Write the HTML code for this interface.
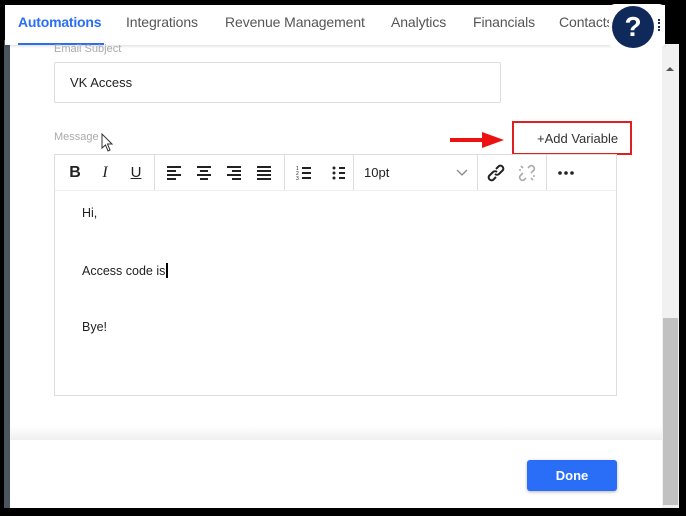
<!DOCTYPE html>
<html><head><style>
*{margin:0;padding:0;box-sizing:border-box}
body{width:686px;height:516px;background:#000;position:relative;overflow:hidden;font-family:"Liberation Sans",sans-serif}
.abs{position:absolute}
.nav span{position:absolute;top:9px;font-size:14px;color:#555;letter-spacing:-0.1px}
.tb{position:absolute;top:0;height:35px;display:flex;align-items:center;justify-content:center}
.sep{position:absolute;top:0;width:1px;height:35px;background:#ddd}
</style></head><body>
<div class="abs" style="left:4px;top:40px;width:6px;height:468px;background:#4a5560"></div>
<div class="abs" style="left:10px;top:44px;width:652px;height:464px;background:#fff"></div>
<div class="abs" style="left:662px;top:44px;width:17px;height:464px;background:#f1f1f1"></div>
<div class="abs" style="left:663px;top:318px;width:15px;height:187px;background:#c1c1c1"></div>
<div class="abs" style="left:666px;top:67px;width:0;height:0;border-left:4px solid transparent;border-right:4px solid transparent;border-bottom:4px solid #555"></div>
<div class="abs nav" style="left:5px;top:5px;width:660px;height:40px;background:#fff;box-shadow:0 1px 3px rgba(0,0,0,.15)">
<span style="left:13px;color:#2a6ef7;font-weight:bold;font-size:14px;letter-spacing:-0.2px">Automations</span>
<div class="abs" style="left:13px;top:38px;width:86px;height:2px;background:#2a6ef7"></div>
<span style="left:121px">Integrations</span>
<span style="left:220px">Revenue Management</span>
<span style="left:386px">Analytics</span>
<span style="left:468px">Financials</span>
<span style="left:554px">Contacts</span>
</div>
<div class="abs" style="left:609px;top:4px;width:56px;height:44px;background:#fff;border-radius:6px"></div>
<div class="abs" style="left:612px;top:6px;width:42px;height:42px;border-radius:50%;background:#0f2a5a;color:#fff;font-weight:bold;font-size:28px;text-align:center;line-height:42px">?</div>
<div class="abs" style="left:658px;top:19px;width:2px;height:12px;border-left:2px dotted #0f2a5a"></div>
<div class="abs" style="left:54px;top:43px;font-size:11px;color:#aaa">Email Subject</div>
<div class="abs" style="left:54px;top:62px;width:447px;height:41px;border:1px solid #ddd;border-radius:2px;font-size:13px;color:#222;padding:12px 0 0 15px">VK Access</div>
<div class="abs" style="left:54px;top:131px;font-size:11px;color:#aaa">Message</div>
<svg class="abs" style="left:101px;top:133px" width="14" height="20"><path d="M1 1 L1 15 L4.5 12 L7 18 L9 17 L6.5 11 L11 11 Z" fill="#fff" stroke="#333" stroke-width="1"/></svg>
<svg class="abs" style="left:448px;top:130px" width="60" height="20"><rect x="2" y="8" width="34" height="4" fill="#e11" /><path d="M34 2 L56 10 L34 18 Z" fill="#e11"/></svg>
<div class="abs" style="left:512px;top:121px;width:120px;height:34px;border:2px solid #e02020;font-size:13px;color:#333;padding:8px 0 0 23px">+Add Variable</div>
<div class="abs" style="left:54px;top:154px;width:563px;height:242px;border:1px solid #ddd">
<div class="abs" style="left:0;top:0;width:561px;height:36px;border-bottom:1px solid #eee">
<div class="tb" style="left:12px;width:16px;font-weight:bold;font-size:16px;color:#222">B</div>
<div class="tb" style="left:42px;width:16px;font-style:italic;font-size:16px;color:#222;font-family:'Liberation Serif'">I</div>
<div class="tb" style="left:73px;width:16px;font-size:15px;color:#222;text-decoration:underline">U</div>
<div class="sep" style="left:99px"></div>
<svg class="abs" style="left:111px;top:10px" width="164" height="16" stroke="#222" stroke-width="2">
<path d="M1 2h14M1 6h9M1 10h14M1 14h9"/>
<path d="M31 2h14M34 6h8M31 10h14M34 14h8"/>
<path d="M61 2h14M66 6h9M61 10h14M66 14h9"/>
<path d="M91 2h14M91 6h14M91 10h14M91 14h14"/>
</svg>
<div class="sep" style="left:229px"></div>
<svg class="abs" style="left:240px;top:10px" width="50" height="16"><g stroke="#222" stroke-width="2"><path d="M7 3h9M7 8h9M7 13h9M44 3h9M44 8h9M44 13h9"/></g><g fill="#222" font-size="5" font-family="Liberation Sans"><text x="1" y="5">1</text><text x="1" y="10">2</text><text x="1" y="15">3</text></g><circle cx="39" cy="3" r="1.5" fill="#222"/><circle cx="39" cy="8" r="1.5" fill="#222"/><circle cx="39" cy="13" r="1.5" fill="#222"/></svg>
<div class="sep" style="left:298px"></div>
<div class="tb" style="left:309px;font-size:13px;color:#222">10pt</div>
<svg class="abs" style="left:401px;top:14px" width="12" height="8"><path d="M1 1l5 5 5-5" stroke="#888" fill="none" stroke-width="1.3"/></svg>
<div class="sep" style="left:422px"></div>
<svg class="abs" style="left:432px;top:8px" width="18" height="20" fill="none" stroke="#222" stroke-width="2"><path d="M9 6l3-3a3 3 0 0 1 4 4l-4 4a3 3 0 0 1-4 0M9 14l-3 3a3 3 0 0 1-4-4l4-4a3 3 0 0 1 4 0"/></svg>
<svg class="abs" style="left:463px;top:8px" width="18" height="20" fill="none" stroke="#aaa" stroke-width="1.6"><path d="M10 5l2-2a3 3 0 0 1 4 4l-3 3M8 15l-2 2a3 3 0 0 1-4-4l3-3M3 3l2 2M13 15l2 2M1 7h2M15 13h2"/></svg>
<div class="sep" style="left:491px"></div>
<svg class="abs" style="left:503px;top:16px" width="16" height="4" fill="#222"><circle cx="2" cy="2" r="1.8"/><circle cx="8" cy="2" r="1.8"/><circle cx="14" cy="2" r="1.8"/></svg>
</div>
<div class="abs" style="left:27px;top:51px;font-size:12.5px;color:#222">Hi,</div>
<div class="abs" style="left:27px;top:108px;font-size:12.5px;color:#222">Access code is<span style="display:inline-block;width:1.5px;height:15px;background:#000;vertical-align:-3px;margin-left:1px"></span></div>
<div class="abs" style="left:27px;top:165px;font-size:12.5px;color:#222">Bye!</div>
</div>
<div class="abs" style="left:10px;top:426px;width:652px;height:14px;background:linear-gradient(#fff,#efefef)"></div>
<div class="abs" style="left:527px;top:460px;width:90px;height:31px;background:#2a6ef7;border-radius:3px;color:#fff;font-weight:bold;font-size:13px;text-align:center;line-height:31px;box-shadow:0 1px 3px rgba(0,0,0,.3)">Done</div>
</body></html>
